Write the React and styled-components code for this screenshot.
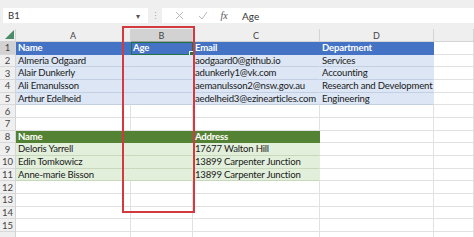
import React from "react";
import styled, { createGlobalStyle } from "styled-components";

const GlobalStyle = createGlobalStyle`
  html, body {
    margin: 0;
    padding: 0;
    background: #efefef;
  }
  body {
    font-family: "Lato", "Liberation Sans", sans-serif;
  }
`;

const ROW_H = 12.67;

const fills = {
  bh: { bg: "#4472c4", color: "#ffffff", weight: 700, line: "#4472c4", vline: "#4472c4" },
  bd: { bg: "#dce6f4", color: "#1a1a1a", weight: 400, line: "#c3cfe2", vline: "#dce6f4" },
  gh: { bg: "#548235", color: "#ffffff", weight: 700, line: "#548235", vline: "#548235" },
  gd: { bg: "#e2efda", color: "#1a1a1a", weight: 400, line: "#c8d8bd", vline: "#e2efda" },
  none: { bg: "#ffffff", color: "#1a1a1a", weight: 400, line: "#e1e1e1", vline: "#e1e1e1" },
};

const rows = [
  [{ t: "Name", k: "bh" }, { t: "Age", k: "bh", sel: true }, { t: "Email", k: "bh" }, { t: "Department", k: "bh" }],
  [{ t: "Almeria Odgaard", k: "bd" }, { k: "bd" }, { t: "aodgaard0@github.io", k: "bd" }, { t: "Services", k: "bd" }],
  [{ t: "Alair Dunkerly", k: "bd" }, { k: "bd" }, { t: "adunkerly1@vk.com", k: "bd" }, { t: "Accounting", k: "bd" }],
  [{ t: "Ali Emanulsson", k: "bd" }, { k: "bd" }, { t: "aemanulsson2@nsw.gov.au", k: "bd" }, { t: "Research and Development", k: "bd" }],
  [{ t: "Arthur Edelheid", k: "bd" }, { k: "bd" }, { t: "aedelheid3@ezinearticles.com", k: "bd" }, { t: "Engineering", k: "bd" }],
  [],
  [],
  [{ t: "Name", k: "gh" }, { k: "gh" }, { t: "Address", k: "gh" }],
  [{ t: "Deloris Yarrell", k: "gd" }, { k: "gd" }, { t: "17677 Walton Hill", k: "gd" }],
  [{ t: "Edin Tomkowicz", k: "gd" }, { k: "gd" }, { t: "13899 Carpenter Junction", k: "gd" }],
  [{ t: "Anne-marie Bisson", k: "gd" }, { k: "gd" }, { t: "13899 Carpenter Junction", k: "gd" }],
  [],
  [],
  [],
  [],
  [],
];

const columns = ["A", "B", "C", "D", ""];

const App = () => {
  return (
    <Page>
      <GlobalStyle />
      <TopStrip />
      <FormulaBar>
        <NameBox>
          <span>B1</span>
          <Caret>▾</Caret>
        </NameBox>
        <Dots>⋮</Dots>
        <FormulaBox>
          <ToolIcon>
            <svg width="9" height="9" viewBox="0 0 9 9">
              <path d="M1 1 L8 8 M8 1 L1 8" stroke="#b9b9b9" strokeWidth="1" fill="none" />
            </svg>
          </ToolIcon>
          <ToolIcon>
            <svg width="10" height="9" viewBox="0 0 10 9">
              <path d="M1 5 L4 8 L9 1" stroke="#b9b9b9" strokeWidth="1" fill="none" />
            </svg>
          </ToolIcon>
          <Fx>fx</Fx>
          <FormulaText>Age</FormulaText>
        </FormulaBox>
      </FormulaBar>
      <Sheet>
        <Corner>
          <svg width="9" height="9" viewBox="0 0 9 9">
            <path d="M9 0 L9 9 L0 9 Z" fill="#217346" opacity="0.8" />
          </svg>
        </Corner>
        {columns.map((c, i) => (
          <ColHead key={c + i} $selected={c === "B"}>
            {c}
          </ColHead>
        ))}
        {rows.map((cells, r) => (
          <React.Fragment key={r}>
            {/* the 16th row only peeks in at the bottom edge, so no label */}
            <RowHead $selected={r === 0}>{r < 15 ? r + 1 : ""}</RowHead>
            {[0, 1, 2, 3, 4].map((ci) => {
              const cell = cells[ci] || {};
              return (
                <Cell key={ci} $kind={cell.k || "none"} $selected={cell.sel}>
                  {cell.t}
                  {cell.sel && <FillHandle />}
                </Cell>
              );
            })}
          </React.Fragment>
        ))}
        <Highlight />
      </Sheet>
    </Page>
  );
};

const Page = styled.div`
  width: 474px;
  height: 237px;
  overflow: hidden;
  display: flex;
  flex-direction: column;
  background: #efefef;
`;

const TopStrip = styled.div`
  height: 8px;
  flex-shrink: 0;
`;

const FormulaBar = styled.div`
  display: flex;
  align-items: stretch;
  height: 15px;
  flex-shrink: 0;
  margin-bottom: 6px;
  padding-left: 3px;
`;

const NameBox = styled.div`
  width: 145px;
  background: #ffffff;
  display: flex;
  align-items: center;
  justify-content: space-between;
  padding: 0 8px 0 5px;
  box-sizing: border-box;
  font-size: 9.5px;
  color: #333;
`;

const Caret = styled.span`
  font-size: 8px;
  color: #555;
`;

const Dots = styled.div`
  width: 14px;
  display: flex;
  align-items: center;
  justify-content: center;
  font-size: 9px;
  color: #a8a8a8;
`;

const FormulaBox = styled.div`
  flex: 1;
  background: #ffffff;
  display: flex;
  align-items: center;
  padding-left: 6px;
`;

const ToolIcon = styled.span`
  width: 23px;
  display: flex;
  align-items: center;
  justify-content: center;
`;

const Fx = styled.span`
  width: 20px;
  font-family: "Liberation Serif", serif;
  font-style: italic;
  font-size: 10px;
  color: #555;
  text-align: center;
  margin-right: 8px;
`;

const FormulaText = styled.span`
  font-size: 10px;
  color: #333;
`;

const Sheet = styled.div`
  position: relative;
  flex: 1;
  display: grid;
  grid-template-columns: 16px 115px 62px 127px 114px 1fr;
  grid-template-rows: 13px repeat(16, ${ROW_H}px);
  background: #ffffff;
  font-size: 9.6px;
  letter-spacing: -0.2px;
`;

const Corner = styled.div`
  background: #efefef;
  border-right: 1px solid #d4d4d4;
  border-bottom: 1px solid #d4d4d4;
  display: flex;
  align-items: flex-end;
  justify-content: flex-end;
  padding: 0 1px 2px 0;
`;

const ColHead = styled.div`
  background: ${({ $selected }) => ($selected ? "#d2d2d2" : "#efefef")};
  border-right: 1px solid #d4d4d4;
  border-bottom: 1px solid ${({ $selected }) => ($selected ? "#a0a0a0" : "#d4d4d4")};
  display: flex;
  align-items: center;
  justify-content: center;
  font-size: 9px;
  letter-spacing: 0;
  color: #444;
`;

const RowHead = styled.div`
  background: ${({ $selected }) => ($selected ? "#d2d2d2" : "#efefef")};
  border-right: 1px solid #d4d4d4;
  border-bottom: 1px solid #d8d8d8;
  display: flex;
  align-items: center;
  justify-content: center;
  font-size: 9.5px;
  letter-spacing: 0;
  color: #444;
`;

const Cell = styled.div`
  position: relative;
  background: ${({ $kind }) => fills[$kind].bg};
  color: ${({ $kind }) => fills[$kind].color};
  font-weight: ${({ $kind }) => fills[$kind].weight};
  border-right: 1px solid ${({ $kind }) => fills[$kind].vline};
  border-bottom: 1px solid ${({ $kind }) => fills[$kind].line};
  outline: ${({ $selected }) => ($selected ? "1.5px solid #217346" : "none")};
  outline-offset: -1.5px;
  padding-left: 2px;
  white-space: nowrap;
  overflow: ${({ $selected }) => ($selected ? "visible" : "hidden")};
  line-height: ${ROW_H}px;
  box-sizing: border-box;
`;

const FillHandle = styled.span`
  position: absolute;
  right: -3px;
  bottom: -3px;
  width: 4px;
  height: 4px;
  background: #217346;
  border: 1px solid #ffffff;
`;

const Highlight = styled.div`
  position: absolute;
  left: 122px;
  top: -3px;
  width: 73px;
  height: 187px;
  border: 2px solid #d33a3f;
  box-sizing: border-box;
  pointer-events: none;
`;

export default App;
